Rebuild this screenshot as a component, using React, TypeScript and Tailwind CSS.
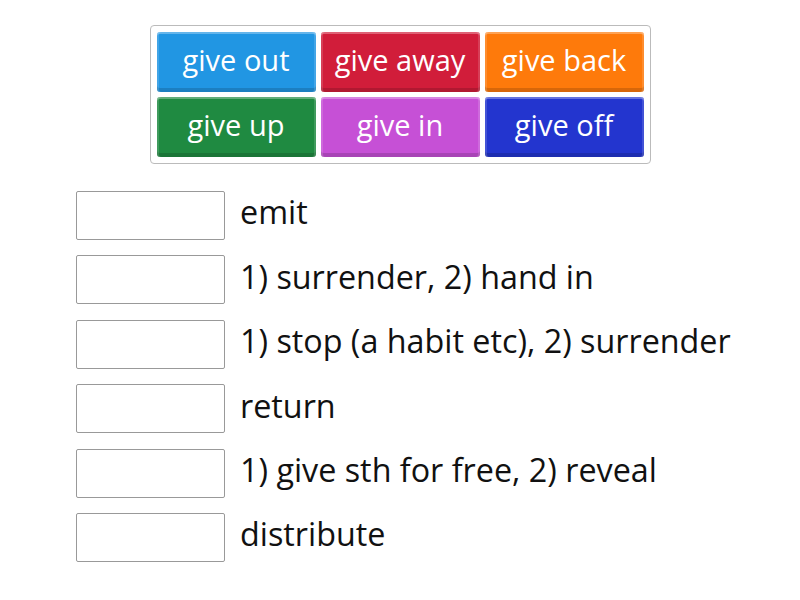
import React from 'react';

const buttons = [
  { label: 'give out', cls: 'bg-[#2196e3]' },
  { label: 'give away', cls: 'bg-[#d11d3a]' },
  { label: 'give back', cls: 'bg-[#fe7a0b]' },
  { label: 'give up', cls: 'bg-[#1f8a41]' },
  { label: 'give in', cls: 'bg-[#c650d6]' },
  { label: 'give off', cls: 'bg-[#2335cf]' },
];

const rows = [
  'emit',
  '1) surrender, 2) hand in',
  '1) stop (a habit etc), 2) surrender',
  'return',
  '1) give sth for free, 2) reveal',
  'distribute',
];

export default function App() {
  return (
    <div className="w-[800px] h-[600px] bg-white font-['Open_Sans',sans-serif] text-[#111]">
      <div className="pt-[25px] flex justify-center">
        {/* Word bank */}
        <div className="border border-[#bbb] rounded-[4px] p-[6px] grid grid-cols-3 gap-[5px]">
          {buttons.map((b) => (
            <div
              key={b.label}
              className={`${b.cls} w-[159px] h-[60px] rounded-[3px] flex items-center justify-center text-white text-[29px] font-medium leading-none pb-[6px] shadow-[inset_0_2px_0_rgba(255,255,255,0.3),inset_2px_0_0_rgba(255,255,255,0.15),inset_-2px_0_0_rgba(255,255,255,0.15),inset_0_-4px_0_rgba(0,0,0,0.15)]`}
            >
              {b.label}
            </div>
          ))}
        </div>
      </div>

      {/* Answer rows */}
      <div className="mt-[27px] pl-[76px] flex flex-col gap-[15.4px]">
        {rows.map((r) => (
          <div key={r} className="flex items-center">
            <div className="w-[149px] h-[49px] border border-[#999] rounded-[2px] bg-white shrink-0" />
            <span className="ml-[15px] text-[32.3px] leading-none pb-[8px]">{r}</span>
          </div>
        ))}
      </div>
    </div>
  );
}
